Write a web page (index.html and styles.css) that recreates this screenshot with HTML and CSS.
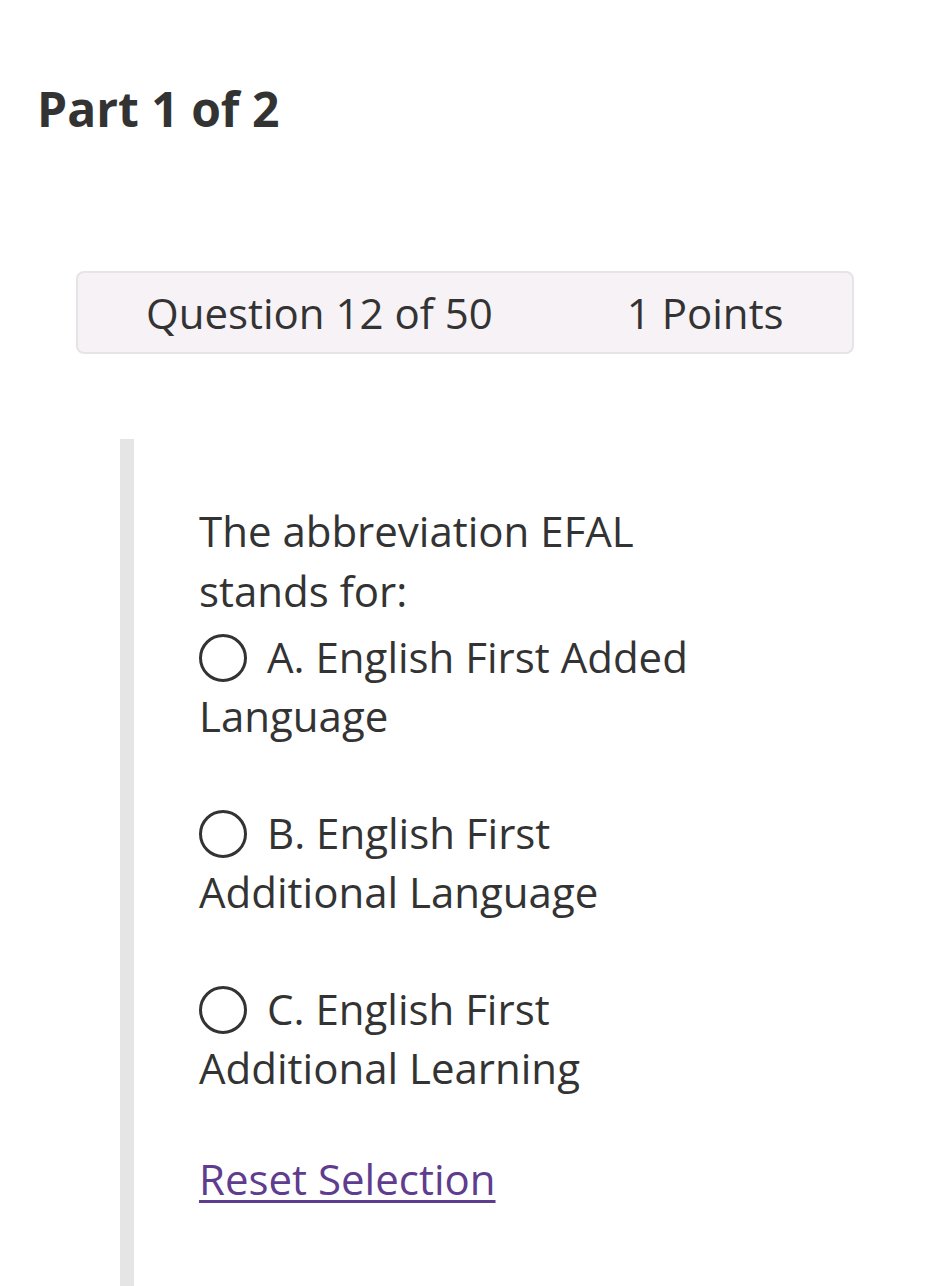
FILE: index.html
```html
<!DOCTYPE html>
<html>
<head>
<meta charset="utf-8">
<link rel="stylesheet" href="styles.css">
</head>
<body>
<h1 class="part-title">Part 1 of 2</h1>
<div class="question-header">
  <span class="q-num">Question 12 of 50</span>
  <span class="q-points">1 Points</span>
</div>
<div class="question-body">
  <div class="question-content">
    <p class="question-text">The abbreviation EFAL stands for:</p>
    <div class="option"><span class="radio"></span>A. English First Added Language</div>
    <div class="option"><span class="radio"></span>B. English First Additional Language</div>
    <div class="option last"><span class="radio"></span>C. English First Additional Learning</div>
    <a class="reset" href="#">Reset Selection</a>
  </div>
</div>
</body>
</html>
```

FILE: styles.css
```css
html, body {
  margin: 0;
  padding: 0;
  background: #ffffff;
  font-family: "Open Sans", "Noto Sans", sans-serif;
  color: #333333;
}
.part-title {
  margin: 0;
  padding: 77px 0 0 37px;
  font-size: 48px;
  font-weight: 700;
  line-height: 64px;
  color: #333333;
}
.question-header {
  margin: 130px 0 0 76px;
  width: 774px;
  height: 79px;
  box-sizing: content-box;
  border: 2px solid #e6e4e6;
  border-radius: 8px;
  background: #f6f2f6;
  display: flex;
  align-items: center;
  font-size: 42px;
  color: #333333;
}
.q-num {
  margin-left: 68px;
}
.q-points {
  margin-left: 134px;
}
.question-body {
  margin: 85px 0 0 120px;
  border-left: 14px solid #e5e5e5;
  min-height: 860px;
  padding-left: 65px;
}
.question-content {
  width: 530px;
  padding-top: 62px;
  font-size: 42px;
  line-height: 60px;
}
.question-text {
  margin: 0 0 6px 0;
}
.option {
  line-height: 59px;
  margin-bottom: 58px;
}
.option.last {
  margin-bottom: 52px;
}
.radio {
  display: inline-block;
  box-sizing: border-box;
  width: 48px;
  height: 48px;
  border: 3px solid #333333;
  border-radius: 50%;
  vertical-align: -9px;
  margin-right: 20px;
}
.reset {
  display: inline-block;
  line-height: 59px;
  color: #603c8e;
  text-decoration: underline;
  text-decoration-thickness: 3px;
  text-underline-offset: 5px;
}
```
